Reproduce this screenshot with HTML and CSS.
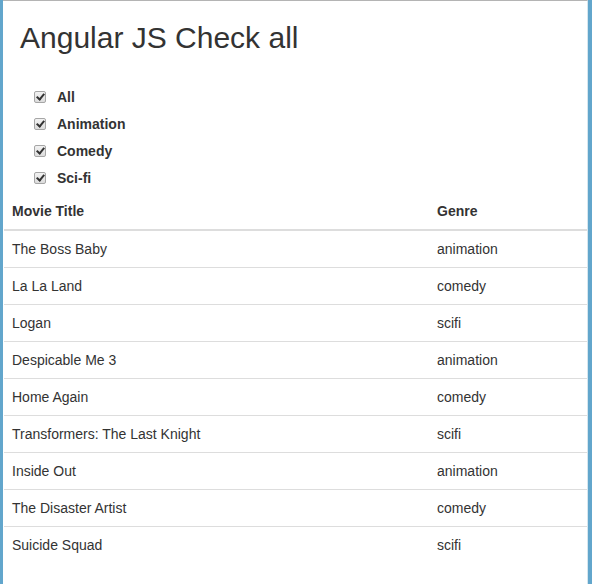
FILE: index.html
```html
<!DOCTYPE html>
<html lang="en">
<head>
    <meta charset="UTF-8">
    <title>Angular JS Check all</title>
    <link rel="stylesheet" href="styles.css">
</head>
<body>
    <div class="frame">
        <div class="page">
            <h2 class="title">Angular JS Check all</h2>

            <div class="filters">
                <label class="check"><input type="checkbox" checked> All</label>
                <label class="check"><input type="checkbox" checked> Animation</label>
                <label class="check"><input type="checkbox" checked> Comedy</label>
                <label class="check"><input type="checkbox" checked> Sci-fi</label>
            </div>

            <table class="movies">
                <thead>
                    <tr><th class="col-title">Movie Title</th><th>Genre</th></tr>
                </thead>
                <tbody>
                    <tr><td>The Boss Baby</td><td>animation</td></tr>
                    <tr><td>La La Land</td><td>comedy</td></tr>
                    <tr><td>Logan</td><td>scifi</td></tr>
                    <tr><td>Despicable Me 3</td><td>animation</td></tr>
                    <tr><td>Home Again</td><td>comedy</td></tr>
                    <tr><td>Transformers: The Last Knight</td><td>scifi</td></tr>
                    <tr><td>Inside Out</td><td>animation</td></tr>
                    <tr><td>The Disaster Artist</td><td>comedy</td></tr>
                    <tr><td>Suicide Squad</td><td>scifi</td></tr>
                </tbody>
            </table>
        </div>
    </div>
</body>
</html>
```

FILE: styles.css
```css
* {margin: 0;padding: 0;box-sizing: border-box;}

html, body {
    height: 100%;
}
body {
    font-family: "Liberation Sans", Arial, sans-serif;
    font-size: 14px;
    line-height: 20px;
    color: #333;
    background-color: #fff;
}

.frame {
    height: 584px;
    border-left: 3px solid #62a6cc;
    border-right: 4px solid #62a6cc;
    overflow: hidden;
}
.page {
    height: 100%;
    padding: 0 0 0 1px;
    border-top: 1px solid #b4b4b4;
    border-right: 1px solid #d6e6ee;
}

.title {
    margin: 20px 0 0 16px;
    font-size: 30px;
    font-weight: normal;
    line-height: 33px;
}

.filters {
    padding: 29px 0 0 30px;
}
.check {
    display: flex;
    align-items: center;
    height: 27px;
    font-weight: bold;
}
.check input {
    -webkit-appearance: none;
    appearance: none;
    position: relative;
    width: 12px;
    height: 12px;
    margin: 0 11px 0 0;
    border: 1px solid #a6a6a6;
    border-radius: 2px;
    background: linear-gradient(#f2f2f2, #dcdcdc);
}
.check input:checked::after {
    content: "";
    position: absolute;
    left: 3px;
    top: 0px;
    width: 3px;
    height: 6px;
    border: solid #333;
    border-width: 0 2px 2px 0;
    transform: rotate(40deg);
}

.movies {
    width: 100%;
    margin-top: 2px;
    border-collapse: collapse;
}
.movies th,
.movies td {
    padding: 8px;
    text-align: left;
    vertical-align: top;
}
.movies th {
    font-weight: bold;
    border-bottom: 2px solid #ddd;
}
.movies td {
    border-top: 1px solid #ddd;
}
.col-title {
    width: 425px;
}
```
